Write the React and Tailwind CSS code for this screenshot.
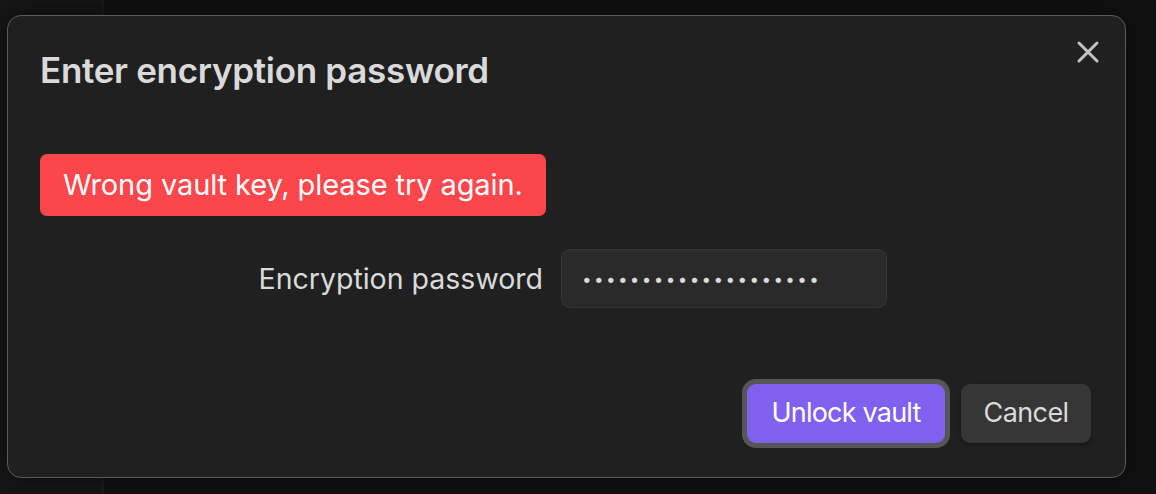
import React, { useState } from 'react';

export default function App() {
    const [password, setPassword] = useState('abcdefghijklmnopqrst');

    return (
        <div className="relative w-[1156px] h-[494px] overflow-hidden bg-[#121212] font-['Inter',sans-serif]">
            {/* Fondo de la app */}
            <div className="flex h-full">
                <div className="w-[104px] h-full bg-[#161616] border-r-2 border-[#1c1c1c]"></div>
                <div className="flex-1 h-full bg-[#111111]"></div>
            </div>

            {/* Modal */}
            <div className="absolute left-[7px] top-[15px] w-[1119px] h-[463px] bg-[#202020] border-[1.5px] border-[#5a5a5a] rounded-[14px] shadow-[0_0_30px_rgba(0,0,0,0.5)] pl-8 pr-[34px] pt-[33px] pb-[34px] flex flex-col">
                <button className="absolute right-[25px] top-[24px] w-[24px] h-[24px] flex items-center justify-center text-[#c4c4c4]">
                    <svg width="24" height="24" viewBox="0 0 24 24" fill="none" stroke="currentColor" strokeWidth="3" strokeLinecap="round">
                        <path d="M3 3 L21 21 M21 3 L3 21" />
                    </svg>
                </button>

                <h2 className="text-[35px] leading-[42px] font-semibold text-[#dadada] tracking-[-0.3px]">
                    Enter encryption password
                </h2>

                <div className="mt-[63px]">
                    <div className="inline-flex items-center h-[62px] px-[23px] bg-[#fb464c] rounded-[7px] text-white text-[29px] tracking-[-0.1px]">
                        Wrong vault key, please try again.
                    </div>
                </div>

                <div className="flex items-center mt-[33px]">
                    <label htmlFor="pwd" className="w-[503px] pt-[2px] text-right text-[28.5px] text-[#dadada]">
                        Encryption password
                    </label>
                    <input
                        id="pwd"
                        type="password"
                        value={password}
                        onChange={(e) => setPassword(e.target.value)}
                        className="ml-[18px] w-[326px] h-[59px] px-[20px] bg-[#2a2a2a] border-[1.5px] border-[#363636] rounded-[9px] text-[#dadada] text-[17px] tracking-[2.4px] outline-none"
                    />
                </div>

                <div className="mt-auto flex justify-end items-center gap-4">
                    <button className="w-[198px] h-[59px] rounded-[9px] bg-[#8060ee] text-white text-[27px] tracking-[-0.8px] shadow-[0_0_0_5px_#565656]">
                        Unlock vault
                    </button>
                    <button className="w-[130px] h-[59px] rounded-[9px] bg-[#363636] text-[#dadada] text-[27px] tracking-[-0.6px] shadow-[0_2px_4px_rgba(0,0,0,0.3)]">
                        Cancel
                    </button>
                </div>
            </div>
        </div>
    );
}
